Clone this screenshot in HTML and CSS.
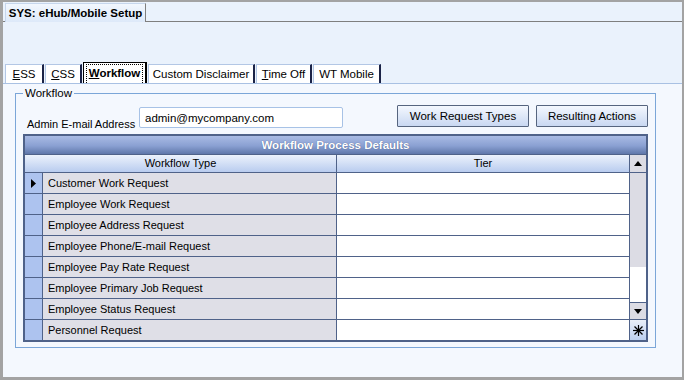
FILE: index.html
```html
<!DOCTYPE html>
<html lang="en">
<head>
    <meta charset="UTF-8">
    <title>SYS: eHub/Mobile Setup</title>
    <link rel="stylesheet" href="styles.css">
</head>
<body>
    <div class="window">
        <div class="titlebar">
            <div class="title-tab">SYS: eHub/Mobile Setup</div>
        </div>

        <div class="tabs">
            <div class="tab tab-ess"><u>E</u>SS</div>
            <div class="tab tab-css"><u>C</u>SS</div>
            <div class="tab tab-workflow active"><span class="focus"><u>W</u>orkflow</span></div>
            <div class="tab tab-disclaimer">Custom Disclaimer</div>
            <div class="tab tab-timeoff"><u>T</u>ime Off</div>
            <div class="tab tab-mobile">WT Mobile</div>
        </div>

        <div class="panel">
            <fieldset class="group">
                <legend>Workflow</legend>

                <div class="email-row">
                    <label class="email-label" for="admin-email">Admin E-mail Address</label>
                    <input class="email-input" id="admin-email" type="text" value="admin@mycompany.com">
                    <button class="btn btn-types">Work Request Types</button>
                    <button class="btn btn-actions">Resulting Actions</button>
                </div>

                <div class="grid">
                    <!-- scrollbar column -->
                    <div class="scroll-up">
                        <svg width="8" height="5" viewBox="0 0 8 5"><path d="M0 5 L4 0 L8 5 Z" fill="#000"/></svg>
                    </div>
                    <div class="scroll-track">
                        <div class="scroll-thumb"></div>
                        <div class="scroll-space"></div>
                        <div class="scroll-down">
                            <svg width="8" height="5" viewBox="0 0 8 5"><path d="M0 0 L8 0 L4 5 Z" fill="#000"/></svg>
                        </div>
                    </div>
                    <div class="new-row">
                        <svg width="11" height="11" viewBox="0 0 11 11">
                            <g stroke="#000" stroke-width="1.2">
                                <line x1="5.5" y1="0" x2="5.5" y2="11"/>
                                <line x1="0" y1="5.5" x2="11" y2="5.5"/>
                                <line x1="1.5" y1="1.5" x2="9.5" y2="9.5"/>
                                <line x1="9.5" y1="1.5" x2="1.5" y2="9.5"/>
                            </g>
                        </svg>
                    </div>

                    <div class="band">Workflow Process Defaults</div>
                    <div class="head head-type">Workflow Type</div>
                    <div class="head head-tier">Tier</div>

                    <div class="sel current">
                        <svg width="5" height="9" viewBox="0 0 5 9"><path d="M0 0 L5 4.5 L0 9 Z" fill="#000"/></svg>
                    </div>
                    <div class="type">Customer Work Request</div>
                    <div class="tier"></div>

                    <div class="sel"></div>
                    <div class="type">Employee Work Request</div>
                    <div class="tier"></div>

                    <div class="sel"></div>
                    <div class="type">Employee Address Request</div>
                    <div class="tier"></div>

                    <div class="sel"></div>
                    <div class="type">Employee Phone/E-mail Request</div>
                    <div class="tier"></div>

                    <div class="sel"></div>
                    <div class="type">Employee Pay Rate Request</div>
                    <div class="tier"></div>

                    <div class="sel"></div>
                    <div class="type">Employee Primary Job Request</div>
                    <div class="tier"></div>

                    <div class="sel"></div>
                    <div class="type">Employee Status Request</div>
                    <div class="tier"></div>

                    <div class="sel"></div>
                    <div class="type">Personnel Request</div>
                    <div class="tier"></div>
                </div>
            </fieldset>
        </div>
    </div>
</body>
</html>
```

FILE: styles.css
```css
body {
    margin: 0;
    font-family: "Liberation Sans", Arial, sans-serif;
    font-size: 11px;
    color: #000;
}

.window {
    width: 684px;
    height: 380px;
    box-sizing: border-box;
    display: flex;
    flex-direction: column;
    background-color: #eaf2fc;
    border-style: solid;
    border-color: #a3a3a3;
    border-width: 2px 2px 3px 3px;
}

/* top strip with the form tab */
.titlebar {
    height: 19px;
    display: flex;
    align-items: flex-end;
    padding-left: 2px;
    border-bottom: 1px solid #7f7f7f;
}

.title-tab {
    height: 19px;
    width: 141px;
    box-sizing: border-box;
    margin-bottom: -1px;
    border-top: 1px solid #c6d6ec;
    border-left: 1px solid #c6d6ec;
    border-right: 1px solid #7f7f7f;
    background: linear-gradient(#f2f7fe, #dde9f9);
    font-size: 11.5px;
    font-weight: bold;
    line-height: 18px;
    text-align: center;
}

/* page tabs */
.tabs {
    height: 21px;
    margin-top: 40px;
    padding-left: 2px;
    display: flex;
    align-items: flex-end;
    gap: 1px;
}

.tab {
    height: 19px;
    box-sizing: border-box;
    background-color: #fff;
    border-top: 1px solid #b3c7e5;
    border-left: 1px solid #b3c7e5;
    border-right: 2px solid #1b2347;
    font-size: 11.5px;
    line-height: 18px;
    text-align: center;
    white-space: nowrap;
}

.tab-ess { width: 39px; }
.tab-css { width: 37px; }
.tab-workflow { width: 64px; }
.tab-disclaimer { width: 107px; }
.tab-timeoff { width: 56px; }
.tab-mobile { width: 68px; }

.tab.active {
    height: 21px;
    border: 1px solid #000;
    border-right-width: 2px;
    border-bottom: none;
    font-weight: bold;
    padding: 1px 2px 0 2px;
}

.tab .focus {
    display: block;
    height: 19px;
    box-sizing: border-box;
    border: 1px dotted #000;
    border-bottom: none;
    line-height: 16px;
}

/* tab page */
.panel {
    flex: 1;
    border-top: 1px solid #a9c1e3;
    background-color: #f4f8fe;
    padding: 2px 0 0 12px;
}

.group {
    width: 641px;
    box-sizing: border-box;
    margin: 0;
    padding: 5px 7px 5px 7px;
    border: 1px solid #7ba6d8;
    min-inline-size: 0;
}

.group legend {
    padding: 0 2px;
    font-size: 11.5px;
    line-height: 14px;
}

.email-row {
    display: flex;
    align-items: flex-start;
}

.email-label {
    width: 112px;
    margin-left: 4px;
    margin-top: 12px;
    line-height: 14px;
}

.email-input {
    width: 204px;
    height: 21px;
    box-sizing: border-box;
    margin: 2px 0 0 0;
    padding: 0 5px;
    border: 1px solid #a7c2e6;
    border-radius: 2px;
    background-color: #fff;
    font-family: "Liberation Sans", Arial, sans-serif;
    font-size: 11.5px;
    color: #000;
}

.btn {
    height: 22px;
    box-sizing: border-box;
    padding: 0;
    border: 1px solid #56657f;
    border-radius: 1px;
    background: linear-gradient(#f4f8fe, #c9d8f2);
    font-family: "Liberation Sans", Arial, sans-serif;
    font-size: 11.5px;
    color: #000;
}

.btn-types {
    width: 132px;
    margin-left: auto;
}

.btn-actions {
    width: 112px;
    margin-left: 7px;
}

/* data grid */
.grid {
    width: 625px;
    height: 208px;
    box-sizing: border-box;
    margin-top: 3px;
    display: grid;
    grid-template-columns: 17px 293px 292px 16px;
    grid-template-rows: 18px 17px repeat(8, 20px);
    gap: 1px;
    border: 2px solid #4f6289;
    background-color: #4f6289;
}

.band {
    grid-column: 1 / -1;
    grid-row: 1;
    background: linear-gradient(#a9bbe4, #8aa0d2 55%, #5f77aa);
    color: #fff;
    font-size: 11.5px;
    font-weight: bold;
    text-align: center;
    line-height: 18px;
    text-shadow: 0 0 1px #3e5080;
}

.head {
    background: linear-gradient(#ecf2fc, #b9ccef);
    text-align: center;
    line-height: 17px;
}

.head-type {
    grid-column: 1 / 3;
}

.sel {
    background-color: #adc3ef;
    display: flex;
    align-items: center;
    justify-content: center;
}

.type {
    background-color: #dfdfe7;
    padding-left: 5px;
    line-height: 20px;
    white-space: nowrap;
}

.tier {
    background-color: #fff;
}

.scroll-up {
    grid-column: 4;
    grid-row: 2;
    background-color: #dcdce4;
    display: flex;
    align-items: center;
    justify-content: center;
}

.scroll-track {
    grid-column: 4;
    grid-row: 3 / 10;
    display: flex;
    flex-direction: column;
    background-color: #fff;
}

.scroll-thumb {
    height: 94px;
    background-color: #dcdce4;
}

.scroll-space {
    flex: 1;
}

.scroll-down {
    height: 16px;
    border-top: 1px solid #4f6289;
    background-color: #dcdce4;
    display: flex;
    align-items: center;
    justify-content: center;
}

.new-row {
    grid-column: 4;
    grid-row: 10;
    background: linear-gradient(#e9eff9, #bdd0f0);
    display: flex;
    align-items: center;
    justify-content: center;
}
```
